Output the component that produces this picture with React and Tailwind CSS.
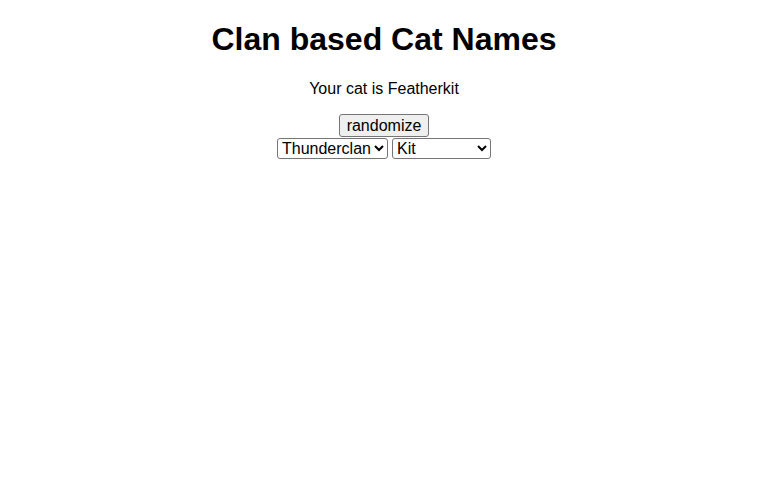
import React, { useState } from 'react';

const CLANS = ['Thunderclan', 'Riverclan', 'Windclan', 'Shadowclan', 'Skyclan'];
const RANKS = [
  { label: 'Kit', suffix: 'kit' },
  { label: 'Apprentice', suffix: 'paw' },
  { label: 'Warrior', suffix: null },
  { label: 'Leader', suffix: 'star' },
];

const PREFIXES = ['Feather', 'Fire', 'Sand', 'Bramble', 'Leaf', 'Storm', 'Ash', 'Moss'];
const WARRIOR_SUFFIXES = ['tail', 'pelt', 'heart', 'whisker', 'claw', 'fur'];

const pick = (list) => list[Math.floor(Math.random() * list.length)];

function makeName(rank) {
  const r = RANKS.find((x) => x.label === rank);
  const suffix = r.suffix || pick(WARRIOR_SUFFIXES);
  return pick(PREFIXES) + suffix;
}

export default function App() {
  const [clan, setClan] = useState('Thunderclan');
  const [rank, setRank] = useState('Kit');
  const [name, setName] = useState('Featherkit');

  const selectCls =
    'border border-[#767676] rounded-[3px] bg-white text-black text-base leading-[normal] h-[21px] align-top';

  return (
    <div className="text-center text-black bg-white min-h-screen font-['Liberation_Sans',Arial,sans-serif] text-base leading-[normal]">
      <h1 className="text-[32px] font-bold leading-[normal] pt-[21.44px] mb-[21.44px]">
        Clan based Cat Names
      </h1>
      <p className="mb-4">Your cat is {name}</p>
      <div className="leading-[0]">
        <button
          className="border border-[#767676] rounded-[3px] bg-[#efefef] px-[7px] py-[2px] leading-[normal] text-black h-[23px]"
          onClick={() => setName(makeName(rank))}
        >
          randomize
        </button>
      </div>
      <div className="mt-px leading-[0]">
        <select className={selectCls} value={clan} onChange={(e) => setClan(e.target.value)}>
          {CLANS.map((c) => (
            <option key={c}>{c}</option>
          ))}
        </select>
        <span className="inline-block w-1" />
        <select
          className={selectCls}
          value={rank}
          onChange={(e) => {
            setRank(e.target.value);
            setName(makeName(e.target.value));
          }}
        >
          {RANKS.map((r) => (
            <option key={r.label}>{r.label}</option>
          ))}
        </select>
      </div>
    </div>
  );
}
